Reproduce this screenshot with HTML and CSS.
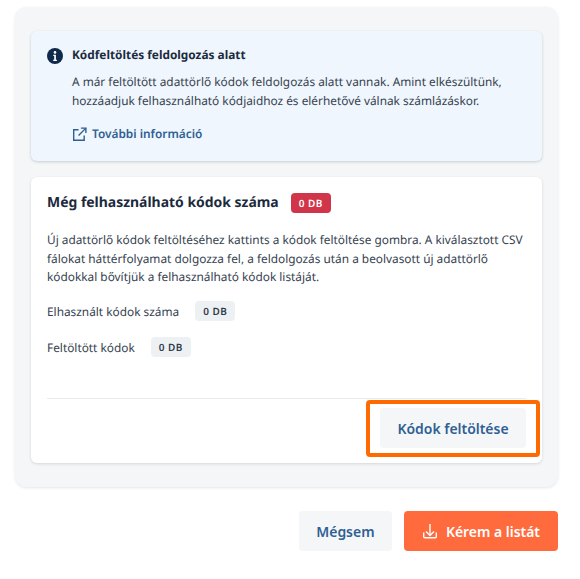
FILE: index.html
```html
<!DOCTYPE html>
<html lang="hu">
<head>
<meta charset="UTF-8" />
<meta name="viewport" content="width=device-width, initial-scale=1" />
<title>Kódok feltöltése</title>
<link rel="stylesheet" href="styles.css">
</head>
<body>

<div class="panel">
  <div class="alert">
    <div class="alert-head">
      <svg class="info-icon" viewBox="0 0 16 16" width="16" height="16">
        <circle cx="8" cy="8" r="8" fill="#0f2a4a"/>
        <circle cx="8" cy="4.4" r="1.3" fill="#fff"/>
        <path d="M6.3 6.7h2.6v5h1v1.4H6.2v-1.4h1v-3.6h-.9z" fill="#fff"/>
      </svg>
      <span class="alert-title">Kódfeltöltés feldolgozás alatt</span>
    </div>
    <p class="alert-text">A már feltöltött adattörlő kódok feldolgozás alatt vannak. Amint elkészültünk, hozzáadjuk felhasználható kódjaidhoz és elérhetővé válnak számlázáskor.</p>
    <a class="more-link" href="#">
      <svg viewBox="0 0 16 16" width="15" height="15" fill="none" stroke="#2f5f93" stroke-width="1.5">
        <path d="M7 3H1.8v11.2H13V9"/>
        <path d="M9.5 1.2h5.3v5.3"/>
        <path d="M14.8 1.2 7 9"/>
      </svg>
      További információ
    </a>
  </div>

  <div class="card">
    <div class="card-body">
      <div class="card-head">
        <h2>Még felhasználható kódok száma</h2>
        <span class="badge badge-red">0 DB</span>
      </div>
      <p class="card-text">Új adattörlő kódok feltöltéséhez kattints a kódok feltöltése gombra. A kiválasztott CSV fálokat háttérfolyamat dolgozza fel, a feldolgozás után a beolvasott új adattörlő kódokkal bővítjük a felhasználható kódok listáját.</p>
      <div class="stat"><span class="stat-label">Elhasznált kódok száma</span><span class="badge">0 DB</span></div>
      <div class="stat"><span class="stat-label">Feltöltött kódok</span><span class="badge">0 DB</span></div>
    </div>
    <div class="card-foot">
      <button class="btn btn-grey btn-upload">Kódok feltöltése</button>
      <div class="highlight"></div>
    </div>
  </div>
</div>

<div class="actions">
  <button class="btn btn-grey btn-cancel">Mégsem</button>
  <button class="btn btn-orange">
    <svg viewBox="0 0 16 16" width="16" height="16" fill="none" stroke="#fff" stroke-width="1.4">
      <path d="M8 1v11"/>
      <path d="M4 8.5 8 12.5 12 8.5"/>
      <path d="M1.7 9.5v4.3a1 1 0 0 0 1 1h10.6a1 1 0 0 0 1-1V9.5"/>
    </svg>
    Kérem a listát
  </button>
</div>

</body>
</html>
```

FILE: styles.css
```css
body {
  margin: 0;
  padding: 7px 22px 0 15px;
  background: #fff;
  color: #36424f;
  font-family: "Noto Sans", sans-serif;
  font-size: 11.85px;
  line-height: 21px;
  text-rendering: geometricPrecision;
}
.panel {
  background: #f4f6f7;
  border-radius: 12px;
  padding: 24px 16px;
  box-shadow: 0 1px 3px rgba(30, 50, 70, 0.12);
}
.alert {
  background: #eff6fd;
  border-radius: 6px;
  padding: 14px 16px 16px;
  height: 100px;
  box-shadow: 0 1px 3px rgba(30, 50, 70, 0.2);
}
.alert-head {
  display: flex;
  align-items: center;
  gap: 9px;
}
.alert-title {
  font-weight: 700;
  color: #1b2a3d;
}
.alert-text {
  margin: 7px 0 0 25px;
  line-height: 18.6px;
}
.more-link {
  display: flex;
  align-items: center;
  gap: 5px;
  margin: 14px 0 0 25px;
  color: #2f5f93;
  font-weight: 600;
  text-decoration: none;
}
.card {
  margin-top: 16px;
  background: #fff;
  border-radius: 6px;
  box-shadow: 0 1px 3px rgba(30, 50, 70, 0.15);
}
.card-body {
  padding: 15px 16px 0;
  height: 206px;
}
.card-head {
  display: flex;
  align-items: center;
  gap: 12px;
}
h2 {
  margin: 0;
  font-size: 13.95px;
  font-weight: 700;
  color: #1b2a3d;
}
.badge {
  background: #eef1f3;
  color: #2f3b4a;
  border-radius: 4px;
  padding: 0 8px;
  font-size: 10px;
  font-weight: 600;
  line-height: 20px;
  letter-spacing: 0.5px;
}
.badge-red {
  background: #d1354a;
  color: #fff;
}
.card-text {
  margin: 18px 0 14.2px;
  line-height: 18.6px;
}
.stat {
  display: flex;
  align-items: center;
  gap: 16px;
  margin-bottom: 15px;
}
.stat-label {
  margin-top: 2px;
  line-height: 19px;
}
.card-foot {
  position: relative;
  display: flex;
  justify-content: flex-end;
  margin: 0 16px;
  padding: 9px 0;
  border-top: 1px solid #e9ecef;
  height: 65px;
  box-sizing: border-box;
}
.btn {
  display: flex;
  align-items: center;
  justify-content: center;
  gap: 8px;
  height: 40px;
  border: none;
  border-radius: 4px;
  padding: 0 18px;
  font-family: inherit;
  font-size: 13.95px;
  font-weight: 600;
  white-space: nowrap;
  cursor: pointer;
}
.btn-grey {
  background: #f4f6f7;
  color: #2f5f93;
}
.btn-orange {
  background: #ff6b3d;
  color: #fff;
}
.btn-upload {
  width: 146px;
}
.btn-cancel {
  width: 93px;
}
.highlight {
  position: absolute;
  top: 1px;
  right: -14px;
  width: 174px;
  height: 57px;
  box-sizing: border-box;
  border: 4px solid #ff6a00;
  border-radius: 4px;
}
.actions {
  display: flex;
  justify-content: flex-end;
  gap: 12px;
  margin-top: 24px;
}
```
